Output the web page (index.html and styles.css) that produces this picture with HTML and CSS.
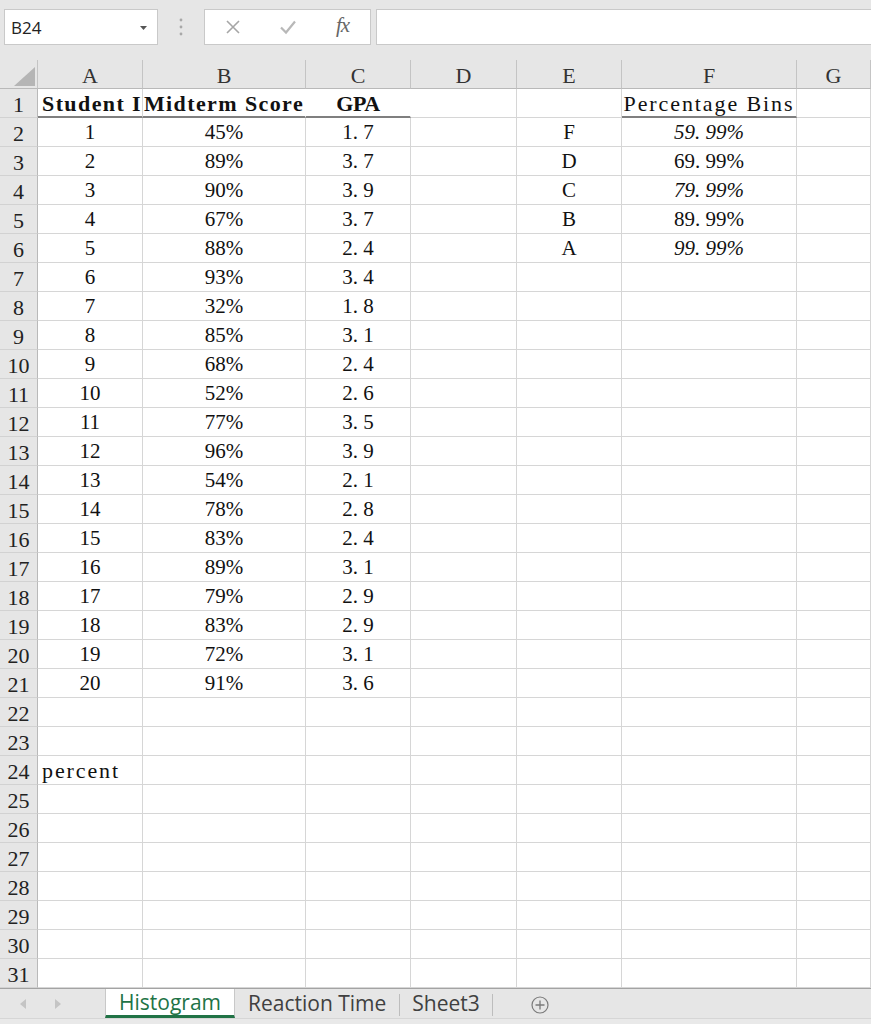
FILE: index.html
```html
<!DOCTYPE html>
<html>
<head>
<meta charset="utf-8">
<link rel="stylesheet" href="styles.css">
</head>
<body>
<div class="topbar">
  <div class="namebox"><span>B24</span><svg class="caret" width="7" height="4" viewBox="0 0 7 4"><path d="M0 0H7L3.5 4Z" fill="#555"/></svg></div>
  <div class="grip"><svg width="4" height="18" viewBox="0 0 4 18"><circle cx="2" cy="2" r="1.4" fill="#a8a8a8"/><circle cx="2" cy="9" r="1.4" fill="#a8a8a8"/><circle cx="2" cy="16" r="1.4" fill="#a8a8a8"/></svg></div>
  <div class="fxbox">
    <span class="slot"><svg width="16" height="16" viewBox="0 0 16 16"><path d="M2 2L14 14M14 2L2 14" stroke="#a6a6a6" stroke-width="1.6" fill="none"/></svg></span>
    <span class="slot"><svg width="18" height="16" viewBox="0 0 18 16"><path d="M2 8.5L7 13.5L16 2.5" stroke="#b8b8b8" stroke-width="2.2" fill="none"/></svg></span>
    <span class="slot fx">fx</span>
  </div>
  <div class="formula"></div>
</div>

<div class="sheet">
  <div class="c corner"><svg width="38" height="29" viewBox="0 0 38 29"><path d="M14 26H35V7Z" fill="#b5b5b5"/></svg></div>
  <div class="c h">A</div><div class="c h">B</div><div class="c h">C</div><div class="c h">D</div><div class="c h">E</div><div class="c h">F</div><div class="c h">G</div>

  <div class="c r">1</div><div class="c t b u left">Student ID</div><div class="c t b u nov">Midterm Score</div><div class="c t b u nov gpa">GPA</div><div class="c"></div><div class="c"></div><div class="c t u">Percentage Bins</div><div class="c"></div>

  <div class="c r">2</div><div class="c">1</div><div class="c">45%</div><div class="c">1. 7</div><div class="c"></div><div class="c">F</div><div class="c i">59. 99%</div><div class="c"></div>
  <div class="c r">3</div><div class="c">2</div><div class="c">89%</div><div class="c">3. 7</div><div class="c"></div><div class="c">D</div><div class="c">69. 99%</div><div class="c"></div>
  <div class="c r">4</div><div class="c">3</div><div class="c">90%</div><div class="c">3. 9</div><div class="c"></div><div class="c">C</div><div class="c i">79. 99%</div><div class="c"></div>
  <div class="c r">5</div><div class="c">4</div><div class="c">67%</div><div class="c">3. 7</div><div class="c"></div><div class="c">B</div><div class="c">89. 99%</div><div class="c"></div>
  <div class="c r">6</div><div class="c">5</div><div class="c">88%</div><div class="c">2. 4</div><div class="c"></div><div class="c">A</div><div class="c i">99. 99%</div><div class="c"></div>
  <div class="c r">7</div><div class="c">6</div><div class="c">93%</div><div class="c">3. 4</div><div class="c"></div><div class="c"></div><div class="c"></div><div class="c"></div>
  <div class="c r">8</div><div class="c">7</div><div class="c">32%</div><div class="c">1. 8</div><div class="c"></div><div class="c"></div><div class="c"></div><div class="c"></div>
  <div class="c r">9</div><div class="c">8</div><div class="c">85%</div><div class="c">3. 1</div><div class="c"></div><div class="c"></div><div class="c"></div><div class="c"></div>
  <div class="c r">10</div><div class="c">9</div><div class="c">68%</div><div class="c">2. 4</div><div class="c"></div><div class="c"></div><div class="c"></div><div class="c"></div>
  <div class="c r">11</div><div class="c">10</div><div class="c">52%</div><div class="c">2. 6</div><div class="c"></div><div class="c"></div><div class="c"></div><div class="c"></div>
  <div class="c r">12</div><div class="c">11</div><div class="c">77%</div><div class="c">3. 5</div><div class="c"></div><div class="c"></div><div class="c"></div><div class="c"></div>
  <div class="c r">13</div><div class="c">12</div><div class="c">96%</div><div class="c">3. 9</div><div class="c"></div><div class="c"></div><div class="c"></div><div class="c"></div>
  <div class="c r">14</div><div class="c">13</div><div class="c">54%</div><div class="c">2. 1</div><div class="c"></div><div class="c"></div><div class="c"></div><div class="c"></div>
  <div class="c r">15</div><div class="c">14</div><div class="c">78%</div><div class="c">2. 8</div><div class="c"></div><div class="c"></div><div class="c"></div><div class="c"></div>
  <div class="c r">16</div><div class="c">15</div><div class="c">83%</div><div class="c">2. 4</div><div class="c"></div><div class="c"></div><div class="c"></div><div class="c"></div>
  <div class="c r">17</div><div class="c">16</div><div class="c">89%</div><div class="c">3. 1</div><div class="c"></div><div class="c"></div><div class="c"></div><div class="c"></div>
  <div class="c r">18</div><div class="c">17</div><div class="c">79%</div><div class="c">2. 9</div><div class="c"></div><div class="c"></div><div class="c"></div><div class="c"></div>
  <div class="c r">19</div><div class="c">18</div><div class="c">83%</div><div class="c">2. 9</div><div class="c"></div><div class="c"></div><div class="c"></div><div class="c"></div>
  <div class="c r">20</div><div class="c">19</div><div class="c">72%</div><div class="c">3. 1</div><div class="c"></div><div class="c"></div><div class="c"></div><div class="c"></div>
  <div class="c r">21</div><div class="c">20</div><div class="c">91%</div><div class="c">3. 6</div><div class="c"></div><div class="c"></div><div class="c"></div><div class="c"></div>
  <div class="c r">22</div><div class="c"></div><div class="c"></div><div class="c"></div><div class="c"></div><div class="c"></div><div class="c"></div><div class="c"></div>
  <div class="c r">23</div><div class="c"></div><div class="c"></div><div class="c"></div><div class="c"></div><div class="c"></div><div class="c"></div><div class="c"></div>
  <div class="c r">24</div><div class="c t left">percent</div><div class="c"></div><div class="c"></div><div class="c"></div><div class="c"></div><div class="c"></div><div class="c"></div>
  <div class="c r">25</div><div class="c"></div><div class="c"></div><div class="c"></div><div class="c"></div><div class="c"></div><div class="c"></div><div class="c"></div>
  <div class="c r">26</div><div class="c"></div><div class="c"></div><div class="c"></div><div class="c"></div><div class="c"></div><div class="c"></div><div class="c"></div>
  <div class="c r">27</div><div class="c"></div><div class="c"></div><div class="c"></div><div class="c"></div><div class="c"></div><div class="c"></div><div class="c"></div>
  <div class="c r">28</div><div class="c"></div><div class="c"></div><div class="c"></div><div class="c"></div><div class="c"></div><div class="c"></div><div class="c"></div>
  <div class="c r">29</div><div class="c"></div><div class="c"></div><div class="c"></div><div class="c"></div><div class="c"></div><div class="c"></div><div class="c"></div>
  <div class="c r">30</div><div class="c"></div><div class="c"></div><div class="c"></div><div class="c"></div><div class="c"></div><div class="c"></div><div class="c"></div>
  <div class="c r">31</div><div class="c"></div><div class="c"></div><div class="c"></div><div class="c"></div><div class="c"></div><div class="c"></div><div class="c"></div>
</div>

<div class="tabbar">
  <div class="tabs">
    <div class="nav">
      <svg width="6" height="10" viewBox="0 0 6 10"><path d="M6 0V10L0 5Z" fill="#c4c4c4"/></svg>
      <svg width="6" height="10" viewBox="0 0 6 10"><path d="M0 0V10L6 5Z" fill="#c4c4c4"/></svg>
    </div>
    <div class="tab active">Histogram</div>
    <div class="tab plain">Reaction Time</div>
    <div class="tab plain divider">Sheet3</div>
    <div class="add"><svg width="18" height="18" viewBox="0 0 18 18"><circle cx="9" cy="9" r="8" stroke="#7a7a7a" stroke-width="1.2" fill="none"/><path d="M9 4.5V13.5M4.5 9H13.5" stroke="#7a7a7a" stroke-width="1.3"/></svg></div>
  </div>
  <div class="strip"></div>
</div>
</body>
</html>
```

FILE: styles.css
```css
html, body {
  margin: 0;
  padding: 0;
}
body {
  width: 871px;
  height: 1024px;
  overflow: hidden;
  background: #ffffff;
  font-family: "Liberation Serif", "Times New Roman", serif;
  color: #111;
}

/* ---------- formula bar ---------- */
.topbar {
  height: 60px;
  box-sizing: border-box;
  padding-top: 9px;
  background: #e6e6e6;
  display: flex;
  align-items: flex-start;
}
.namebox {
  margin-left: 4px;
  width: 154px;
  height: 36px;
  box-sizing: border-box;
  background: #fff;
  border: 1px solid #c9c9c9;
  display: flex;
  align-items: center;
  justify-content: space-between;
  padding: 0 10px 0 6px;
  font-family: "Open Sans", "Noto Sans", sans-serif;
  font-size: 17px;
  color: #222;
}
.caret {
  margin-top: 2px;
}
.grip {
  width: 46px;
  height: 36px;
  display: flex;
  align-items: center;
  justify-content: center;
}
.fxbox {
  width: 167px;
  height: 36px;
  box-sizing: border-box;
  background: #fff;
  border: 1px solid #c9c9c9;
  display: flex;
  align-items: center;
}
.slot {
  width: 56px;
  height: 34px;
  display: flex;
  align-items: center;
  justify-content: center;
}
.fx {
  font-family: "Liberation Serif", serif;
  font-style: italic;
  font-size: 21px;
  color: #666;
  letter-spacing: -1px;
  padding-bottom: 3px;
}
.formula {
  margin-left: 5px;
  flex: 1;
  height: 36px;
  box-sizing: border-box;
  background: #fff;
  border: 1px solid #c9c9c9;
  border-right: none;
}

/* ---------- grid ---------- */
.sheet {
  display: grid;
  grid-template-columns: 38px 105px 163px 105px 106px 105px 175px 74px;
  grid-auto-rows: 29px;
}
.c {
  box-sizing: border-box;
  border-right: 1px solid #d6d6d6;
  border-bottom: 1px solid #d6d6d6;
  line-height: 29px;
  font-size: 21px;
  text-align: center;
  white-space: pre;
  overflow: hidden;
  color: #111;
}
.h, .corner {
  background: #e6e6e6;
  border-right-color: #c4c4c4;
  border-bottom-color: #b9b9b9;
  font-size: 22px;
  color: #333;
  line-height: 32px;
}
.corner {
  line-height: 0;
}
.r {
  background: #e6e6e6;
  border-right-color: #b9b9b9;
  border-bottom-color: #d2d2d2;
  font-size: 22px;
  color: #222;
  line-height: 31px;
}
.t {
  font-size: 22px;
  letter-spacing: 1.9px;
  line-height: 30px;
  color: #111;
}
.b {
  font-weight: bold;
  letter-spacing: 1.4px;
}
.gpa {
  letter-spacing: -0.5px;
}
.u {
  border-bottom: 2px solid #7f7f7f;
}
.nov {
  border-right-color: #ffffff;
}
.left {
  text-align: left;
  padding-left: 4px;
}
.i {
  font-style: italic;
}

/* ---------- sheet tabs ---------- */
.tabbar {
  height: 36px;
  box-sizing: border-box;
  border-top: 1px solid #a3a3a3;
  background: #e6e6e6;
}
.tabs {
  height: 29px;
  display: flex;
  align-items: stretch;
  font-family: "Open Sans", "Noto Sans", sans-serif;
  font-size: 21px;
  color: #404040;
}
.nav {
  width: 105px;
  display: flex;
  align-items: center;
  gap: 29px;
  padding-left: 20px;
  box-sizing: border-box;
}
.tab {
  display: flex;
  align-items: center;
  padding: 0 13px;
  line-height: 1;
}
.tab.active {
  width: 130px;
  box-sizing: border-box;
  justify-content: center;
  padding: 0;
  background: #fff;
  border-left: 1px solid #c8c8c8;
  border-right: 1px solid #c8c8c8;
  border-bottom: 3px solid #217346;
  color: #217346;
}
.tab.plain {
  position: relative;
}
.tab.divider::before,
.tab.divider::after {
  content: "";
  position: absolute;
  top: 5px;
  bottom: 2px;
  border-left: 1px solid #bdbdbd;
}
.tab.divider::before {
  left: 0;
}
.tab.divider::after {
  right: 0;
}
.add {
  margin-left: 38px;
  display: flex;
  align-items: center;
  padding-top: 3px;
}
.strip {
  height: 6px;
  border-top: 1px solid #d6d6d6;
  background: #e9e9e9;
}
```
